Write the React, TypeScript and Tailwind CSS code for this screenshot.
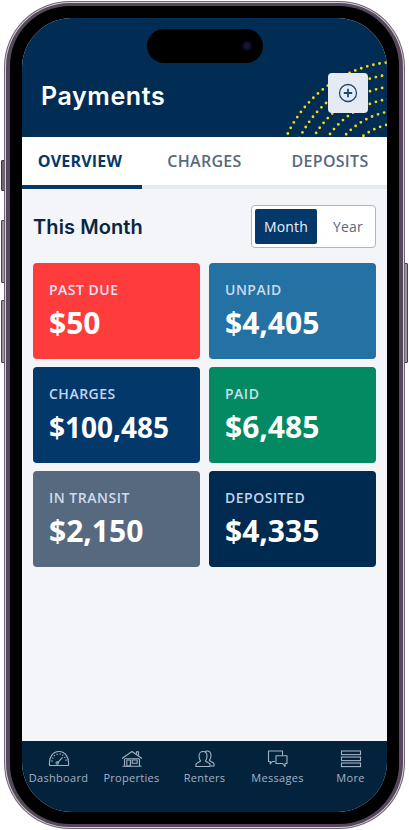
const OPEN = "font-['Open_Sans',sans-serif]";

const stats = [
  { label: "PAST DUE", value: "$50", bg: "bg-[#ff3c3c]", size: "text-[30px]", tone: "text-[#e3e3f6]" },
  { label: "UNPAID", value: "$4,405", bg: "bg-[#2471a3]", size: "text-[30px]", tone: "text-[#c8daf0]" },
  { label: "CHARGES", value: "$100,485", bg: "bg-[#03386b]", size: "text-[28px]", tone: "text-[#c3d5ee]" },
  { label: "PAID", value: "$6,485", bg: "bg-[#038a62]", size: "text-[30px]", tone: "text-[#c8e0ea]" },
  { label: "IN TRANSIT", value: "$2,150", bg: "bg-[#56697f]", size: "text-[30px]", tone: "text-[#d0dcee]" },
  { label: "DEPOSITED", value: "$4,335", bg: "bg-[#012a50]", size: "text-[30px]", tone: "text-[#c3d5ee]" },
];

function GaugeIcon() {
  return (
    <svg width="22" height="18" viewBox="0 0 22 18" fill="none" stroke="currentColor" strokeWidth="1.1" strokeLinejoin="round">
      <path d="M1.5 15.5C.6 7 5 1.5 11 1.5S21.4 7 20.500 15.500Z" />
      <path d="M4 11.500C4 7 7 4 11 4s7 3 7 7.500" strokeWidth="1.6" strokeDasharray="1 2" />
      <path d="M9.500 12.800 14.600 7.400" />
      <circle cx="9.200" cy="13" r="1.200" />
    </svg>
  );
}

function HouseIcon() {
  return (
    <svg width="22" height="18" viewBox="0 0 22 18" fill="none" stroke="currentColor" strokeWidth="1.1" strokeLinejoin="round">
      <path d="M1 8.500 11 1.500l10 7M4 8.800h14M15.500 3.800V1.800h2v3.400" />
      <path d="M3.500 8.800v7M18.500 8.800v7M1.500 16.200h19" />
      <rect x="5.800" y="10" width="3.600" height="6" />
      <rect x="11.200" y="10" width="5" height="3.200" />
    </svg>
  );
}

function PeopleIcon() {
  return (
    <svg width="22" height="18" viewBox="0 0 22 18" fill="none" stroke="currentColor" strokeWidth="1.1" strokeLinejoin="round">
      <path d="M2 16.500v-2.200c0-1.600 3.600-2.200 4.600-3.400C5.400 9.400 5 7.800 5 6.200 5 3.400 6.600 1.500 9 1.500s4 1.900 4 4.700c0 1.600-.4 3.200-1.600 4.700 1 1.200 4.600 1.800 4.600 3.400v2.200Z" />
      <path d="M11 1.600c.7-.4 1.300-.6 2-.6 2.400 0 4 1.900 4 4.700 0 1.600-.4 3.200-1.600 4.700 1 1.200 4.600 1.800 4.600 3.400v2.200h-3.500" />
    </svg>
  );
}

function ChatIcon() {
  return (
    <svg width="22" height="18" viewBox="0 0 22 18" fill="none" stroke="currentColor" strokeWidth="1.1" strokeLinejoin="round">
      <path d="M8 11.500H5.200L3.200 14V11.500H1.500V1H15.500V5.500" />
      <path d="M9 5.800H20V13.500H18V16.500L15.500 13.500H9Z" />
    </svg>
  );
}

function MenuIcon() {
  return (
    <svg width="22" height="18" viewBox="0 0 22 18" fill="none" stroke="currentColor" strokeWidth="1.1">
      <rect x="1.500" y="1" width="19" height="3.600" />
      <rect x="1.500" y="7" width="19" height="3.600" />
      <rect x="1.500" y="13" width="19" height="3.600" />
    </svg>
  );
}

const navItems = [
  { label: "Dashboard", icon: <GaugeIcon /> },
  { label: "Properties", icon: <HouseIcon /> },
  { label: "Renters", icon: <PeopleIcon /> },
  { label: "Messages", icon: <ChatIcon /> },
  { label: "More", icon: <MenuIcon /> },
];

function Arcs() {
  const radii = [126.5, 114, 102, 90, 77.5, 65];
  return (
    <svg className="absolute left-0 top-0" width="365" height="119" viewBox="22 18 365 119" fill="none">
      {radii.map((r) => (
        <circle key={r} cx="402" cy="188" r={r} stroke="#ffd60a" strokeWidth="2.8" strokeLinecap="round" strokeDasharray="0 6.3" />
      ))}
    </svg>
  );
}

export default function App() {
  return (
    <div className="relative w-[409px] h-[830px] bg-white overflow-hidden pl-[4px] pt-[1px]">
      {/* side buttons */}
      <div className="absolute left-[1px] top-[160px] w-[4px] h-[31px] rounded-l-[1px] bg-[#6f6474] border border-[#3f3644]" />
      <div className="absolute left-[1px] top-[220px] w-[4px] h-[63px] rounded-l-[1px] bg-[#9a909e] border border-[#4a4050]" />
      <div className="absolute left-[1px] top-[300px] w-[4px] h-[63px] rounded-l-[1px] bg-[#9a909e] border border-[#4a4050]" />
      <div className="absolute left-[404px] top-[263px] w-[4px] h-[100px] rounded-r-[1px] bg-[#9a909e] border border-[#4a4050]" />

      <div className="relative w-[401px] h-[828px] rounded-[66px] bg-[#6f6375] p-[1px]">
        <div className="w-full h-full rounded-[65px] bg-[#d6d0d8] p-[1px]">
          <div className="w-full h-full rounded-[64px] bg-[#54485a] px-[4px] py-[3px]">
            <div className="w-full h-full rounded-[60px] bg-black p-[12px]">
              <div className={`relative flex flex-col w-[365px] h-[794px] rounded-[50px] overflow-hidden bg-[#f4f5f8] ${OPEN}`}>
                {/* header */}
                <header className="relative flex items-end justify-between h-[119px] shrink-0 bg-[#012d55] pl-[19px] pr-[19px] pb-[24px]">
                  <Arcs />
                  <h1 className="relative mb-[2px] font-['Inter',sans-serif] text-[25px] leading-[30px] font-semibold tracking-[0.6px] text-white">Payments</h1>
                  <button className="relative flex items-center justify-center w-10 h-10 rounded-[4px] bg-[#e6eaf3]">
                    <svg width="20" height="20" viewBox="0 0 20 20" fill="none" stroke="#1c4a7c">
                      <circle cx="10" cy="10" r="8.500" strokeWidth="1.300" />
                      <path d="M10 5.800v8.400M5.800 10h8.400" strokeWidth="1.800" />
                    </svg>
                  </button>
                </header>

                {/* island */}
                <div className="absolute left-[125px] top-[11px] flex items-center justify-end w-[116px] h-[34px] rounded-[17px] bg-black pr-[11px]">
                  <span className="block w-[10px] h-[10px] rounded-full bg-[#14143c] border-[2px] border-[#0c0c1c]" />
                </div>

                {/* tabs */}
                <nav className="flex h-[52px] shrink-0 bg-white border-b-[4px] border-[#e6e9f0] text-[16px] leading-[22px]">
                  <div className="relative flex items-center justify-center w-[120px] pr-[4px] font-bold tracking-[0.2px] text-[#04386b]">
                    OVERVIEW
                    <span className="absolute left-0 right-0 bottom-[-4px] h-[4px] bg-[#04386b]" />
                  </div>
                  <div className="flex items-center justify-center w-[125px] font-semibold tracking-[0.3px] text-[#56697f]">CHARGES</div>
                  <div className="flex items-center justify-center w-[120px] pl-[6px] font-semibold tracking-[0.3px] text-[#56697f]">DEPOSITS</div>
                </nav>

                {/* content */}
                <main className="flex-1 px-[11px] pt-[16px]">
                  <div className="flex items-center justify-between h-[43px]">
                    <h2 className="font-['Inter',sans-serif] text-[20px] font-semibold tracking-[0.1px] text-[#0b2540]">This Month</h2>
                    <div className="flex w-[125px] h-[43px] rounded-[4px] border border-[#a9b7c9] bg-white p-[3px] text-[14px]">
                      <span className="flex items-center justify-center w-[62px] rounded-[2px] bg-[#04386b] font-medium tracking-[0.2px] text-[#eef1f7]">Month</span>
                      <span className="flex flex-1 items-center justify-center pl-[7px] font-medium tracking-[0.2px] text-[#56697f]">Year</span>
                    </div>
                  </div>

                  <div className="grid grid-cols-2 gap-x-[9px] gap-y-[8px] mt-[15px]">
                    {stats.map((s) => (
                      <div key={s.label} className={`h-[96px] rounded-[4px] pl-[16px] pt-[17px] ${s.bg}`}>
                        <div className={`text-[14px] leading-[20px] font-semibold tracking-[0.5px] ${s.tone}`}>{s.label}</div>
                        <div className={`mt-[5px] leading-[36px] font-bold text-white ${s.size}`}>{s.value}</div>
                      </div>
                    ))}
                  </div>
                </main>

                {/* bottom nav */}
                <footer className="grid grid-cols-5 h-[71px] shrink-0 bg-[#03233c] pt-[9px] text-[#a3b3c4]">
                  {navItems.map((n) => (
                    <div key={n.label} className="flex flex-col items-center">
                      {n.icon}
                      <span className="mt-[2px] text-[11px] leading-[15px] font-medium tracking-[0.3px]">{n.label}</span>
                    </div>
                  ))}
                </footer>
              </div>
            </div>
          </div>
        </div>
      </div>
    </div>
  );
}
